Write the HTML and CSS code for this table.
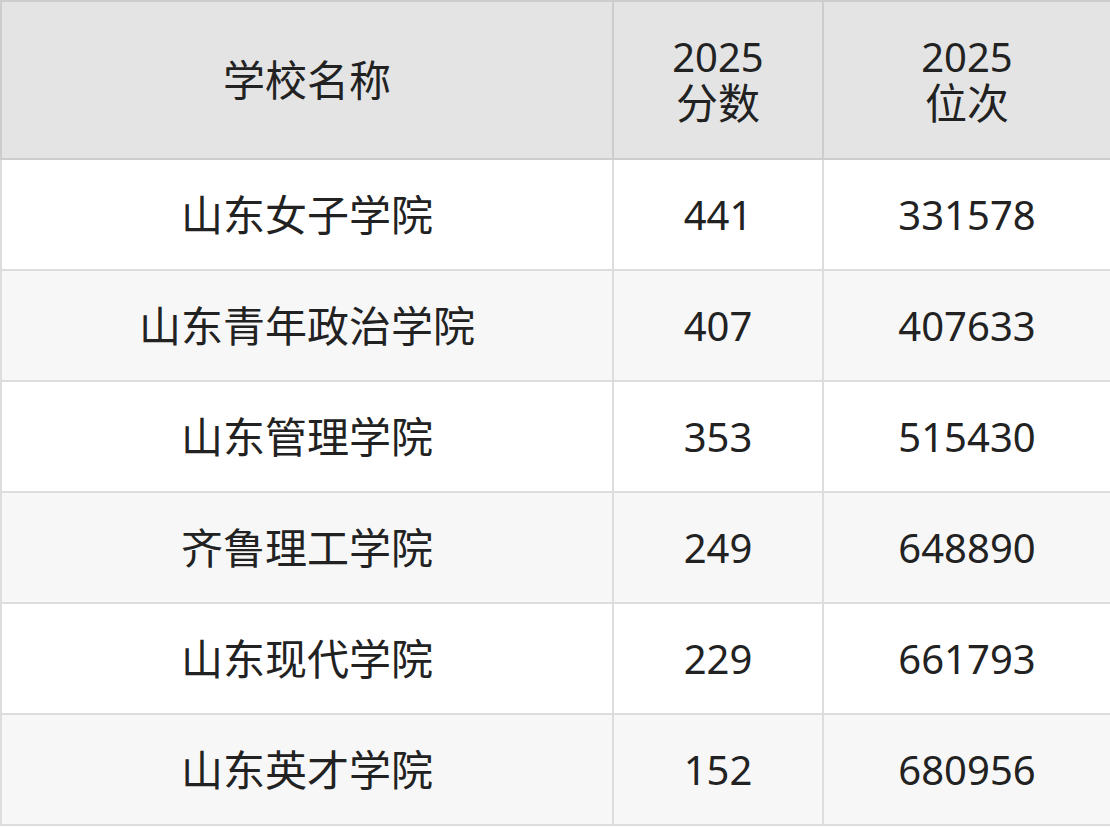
FILE: index.html
```html
<!DOCTYPE html>
<html lang="zh-CN">
<head>
<meta charset="utf-8">
<title>2025 分数位次</title>
<link rel="stylesheet" href="styles.css">
</head>
<body>
<table class="score-table">
  <colgroup>
    <col class="col-name">
    <col class="col-score">
    <col class="col-rank">
  </colgroup>
  <thead>
    <tr>
      <th class="cjk">学校名称</th>
      <th>2025<br><span class="cjk">分数</span></th>
      <th>2025<br><span class="cjk">位次</span></th>
    </tr>
  </thead>
  <tbody>
    <tr><td class="cjk">山东女子学院</td><td>441</td><td>331578</td></tr>
    <tr><td class="cjk">山东青年政治学院</td><td>407</td><td>407633</td></tr>
    <tr><td class="cjk">山东管理学院</td><td>353</td><td>515430</td></tr>
    <tr><td class="cjk">齐鲁理工学院</td><td>249</td><td>648890</td></tr>
    <tr><td class="cjk">山东现代学院</td><td>229</td><td>661793</td></tr>
    <tr><td class="cjk">山东英才学院</td><td>152</td><td>680956</td></tr>
  </tbody>
</table>
</body>
</html>
```

FILE: styles.css
```css
html, body {
  margin: 0;
  padding: 0;
  background: #ffffff;
}

.score-table {
  width: 1110px;
  table-layout: fixed;
  border-collapse: collapse;
  font-family: "Noto Sans", "Noto Sans CJK SC", sans-serif;
  font-size: 40px;
  color: #222222;
}

.col-name { width: 612px; }
.col-score { width: 210px; }
.col-rank { width: 288px; }

.score-table th,
.score-table td {
  text-align: center;
  vertical-align: middle;
  padding: 0;
  font-weight: 400;
}

.score-table .cjk {
  font-size: 42px;
}

.score-table th {
  background: #e4e4e4;
  border: 2px solid #cdcdcd;
  height: 156px;
  line-height: 46px;
}

.score-table td {
  border: 2px solid #dddddd;
  height: 109px;
  line-height: 48px;
}

.score-table tbody tr:nth-child(odd) td {
  background: #ffffff;
}

.score-table tbody tr:nth-child(even) td {
  background: #f7f7f7;
}
```
